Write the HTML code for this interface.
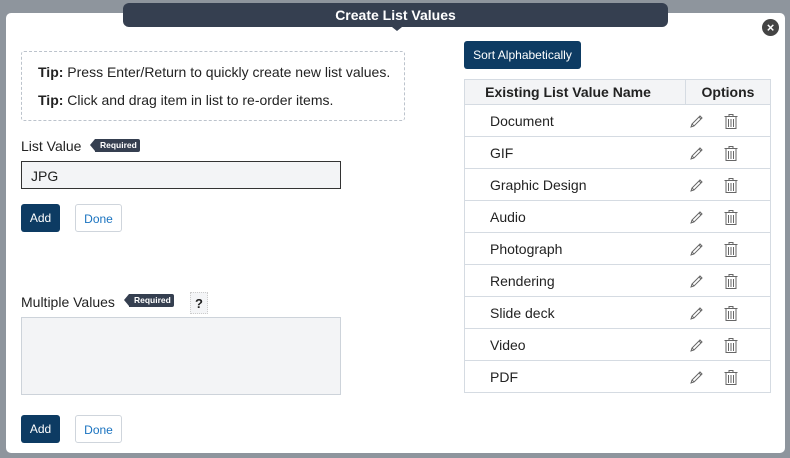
<!DOCTYPE html>
<html><head><meta charset="utf-8"><style>
*{box-sizing:border-box;margin:0;padding:0}
body{width:790px;height:458px;overflow:hidden;background:#8e959d;font-family:"Liberation Sans",sans-serif;position:relative;color:#222}
.modal{position:absolute;left:6px;top:13px;width:779px;height:440px;background:#fff;border-radius:5px}
.title{position:absolute;left:123px;top:3px;width:545px;height:24px;background:#353f50;border-radius:6px;color:#fff;font-weight:bold;font-size:14px;text-align:center;line-height:24px;z-index:2}
.title:after{content:"";position:absolute;left:269px;bottom:-4px;border-left:5px solid transparent;border-right:5px solid transparent;border-top:4px solid #353f50}
.close{position:absolute;left:762px;top:19px;width:17px;height:17px;border-radius:50%;background:#444;color:#fff;font-size:13px;line-height:17px;text-align:center;font-weight:bold}
.tip{position:absolute;left:21px;top:51px;width:384px;height:70px;border:1px dashed #bcc3cc;border-radius:3px;font-size:14px;padding:12px 0 0 16px}
.tip p{margin-bottom:12px}
.lbl{position:absolute;font-size:14px}
.req{position:absolute;height:13px;background:#353f50;color:#fff;font-size:8.5px;font-weight:bold;line-height:13px;padding:0 3px 0 5px;border-radius:0 2px 2px 0}
.req:before{content:"";position:absolute;left:-5px;top:0;border-top:6.5px solid transparent;border-bottom:6.5px solid transparent;border-right:5px solid #353f50}
.inp{position:absolute;left:21px;top:161px;width:320px;height:28px;border:1px solid #333;background:#f3f4f6;font-size:14px;padding:6px 9px}
.ta{position:absolute;left:21px;top:317px;width:320px;height:78px;border:1px solid #cdd3da;background:#f3f4f6}
.btn{position:absolute;height:28px;border-radius:3px;font-size:12px;line-height:28px;text-align:center}
.add{background:#0d3b63;color:#fff;width:39px;left:21px}
.done{border:1px solid #cfd5dc;color:#1a73c0;width:47px;left:75px}
.q{position:absolute;left:190px;top:292px;width:18px;height:22px;border:1px dotted #ccc;background:#f4f5f7;font-weight:bold;font-size:13px;text-align:center;line-height:22px}
.sort{position:absolute;left:464px;top:41px;width:117px;height:28px;background:#0d3b63;color:#fff;border-radius:3px;font-size:12px;line-height:28px;text-align:center}
table{position:absolute;left:464px;top:79px;width:307px;border-collapse:collapse;border:1px solid #d5dbe2;font-size:14px}
th{height:25px;background:#f3f4f6;border-bottom:1px solid #d5dbe2;font-weight:bold;font-size:14px}
th:first-child{border-right:1px solid #d5dbe2;width:221px;padding-right:14px}
td{height:32px;border-top:1px solid #d5dbe2}
td:first-child{padding-left:25px}
</style></head><body>
<div class="modal"></div>
<div class="title">Create List Values</div>
<div class="close">×</div>
<div class="tip"><p><b>Tip:</b> Press Enter/Return to quickly create new list values.</p><p><b>Tip:</b> Click and drag item in list to re-order items.</p></div>
<div class="lbl" style="left:21px;top:138px">List Value</div>
<div class="req" style="left:95px;top:139px">Required</div>
<div class="inp">JPG</div>
<div class="btn add" style="top:204px">Add</div>
<div class="btn done" style="top:204px">Done</div>
<div class="lbl" style="left:21px;top:294px">Multiple Values</div>
<div class="req" style="left:129px;top:294px">Required</div>
<div class="q">?</div>
<div class="ta"></div>
<div class="btn add" style="top:415px">Add</div>
<div class="btn done" style="top:415px">Done</div>
<div class="sort">Sort Alphabetically</div>
<table>
<tr><th>Existing List Value Name</th><th>Options</th></tr>
<tr><td>Document</td><td></td></tr>
<tr><td>GIF</td><td></td></tr>
<tr><td>Graphic Design</td><td></td></tr>
<tr><td>Audio</td><td></td></tr>
<tr><td>Photograph</td><td></td></tr>
<tr><td>Rendering</td><td></td></tr>
<tr><td>Slide deck</td><td></td></tr>
<tr><td>Video</td><td></td></tr>
<tr><td>PDF</td><td></td></tr>
</table>
<svg style="position:absolute;left:0;top:0" width="790" height="458">
<defs>
<g id="ic">
<path d="M1 13 L2 10 L10 2 L12 4 L4 12 Z M2 10 L4 12 M9 3 L11 5" fill="none" stroke="#666" stroke-width="1"/>
<g transform="translate(34,0)" fill="none" stroke="#666" stroke-width="1"><path d="M0.5 2.5 H13.5 M5 2.5 V0.5 H9 V2.5 M2 3 V14.5 H12 V3 M4.5 5 V13 M7 5 V13 M9.5 5 V13"/></g>
</g>
</defs>
<use href="#ic" x="690" y="114"/>
<use href="#ic" x="690" y="146"/>
<use href="#ic" x="690" y="178"/>
<use href="#ic" x="690" y="210"/>
<use href="#ic" x="690" y="242"/>
<use href="#ic" x="690" y="274"/>
<use href="#ic" x="690" y="306"/>
<use href="#ic" x="690" y="338"/>
<use href="#ic" x="690" y="370"/>
</svg>
</body></html>
